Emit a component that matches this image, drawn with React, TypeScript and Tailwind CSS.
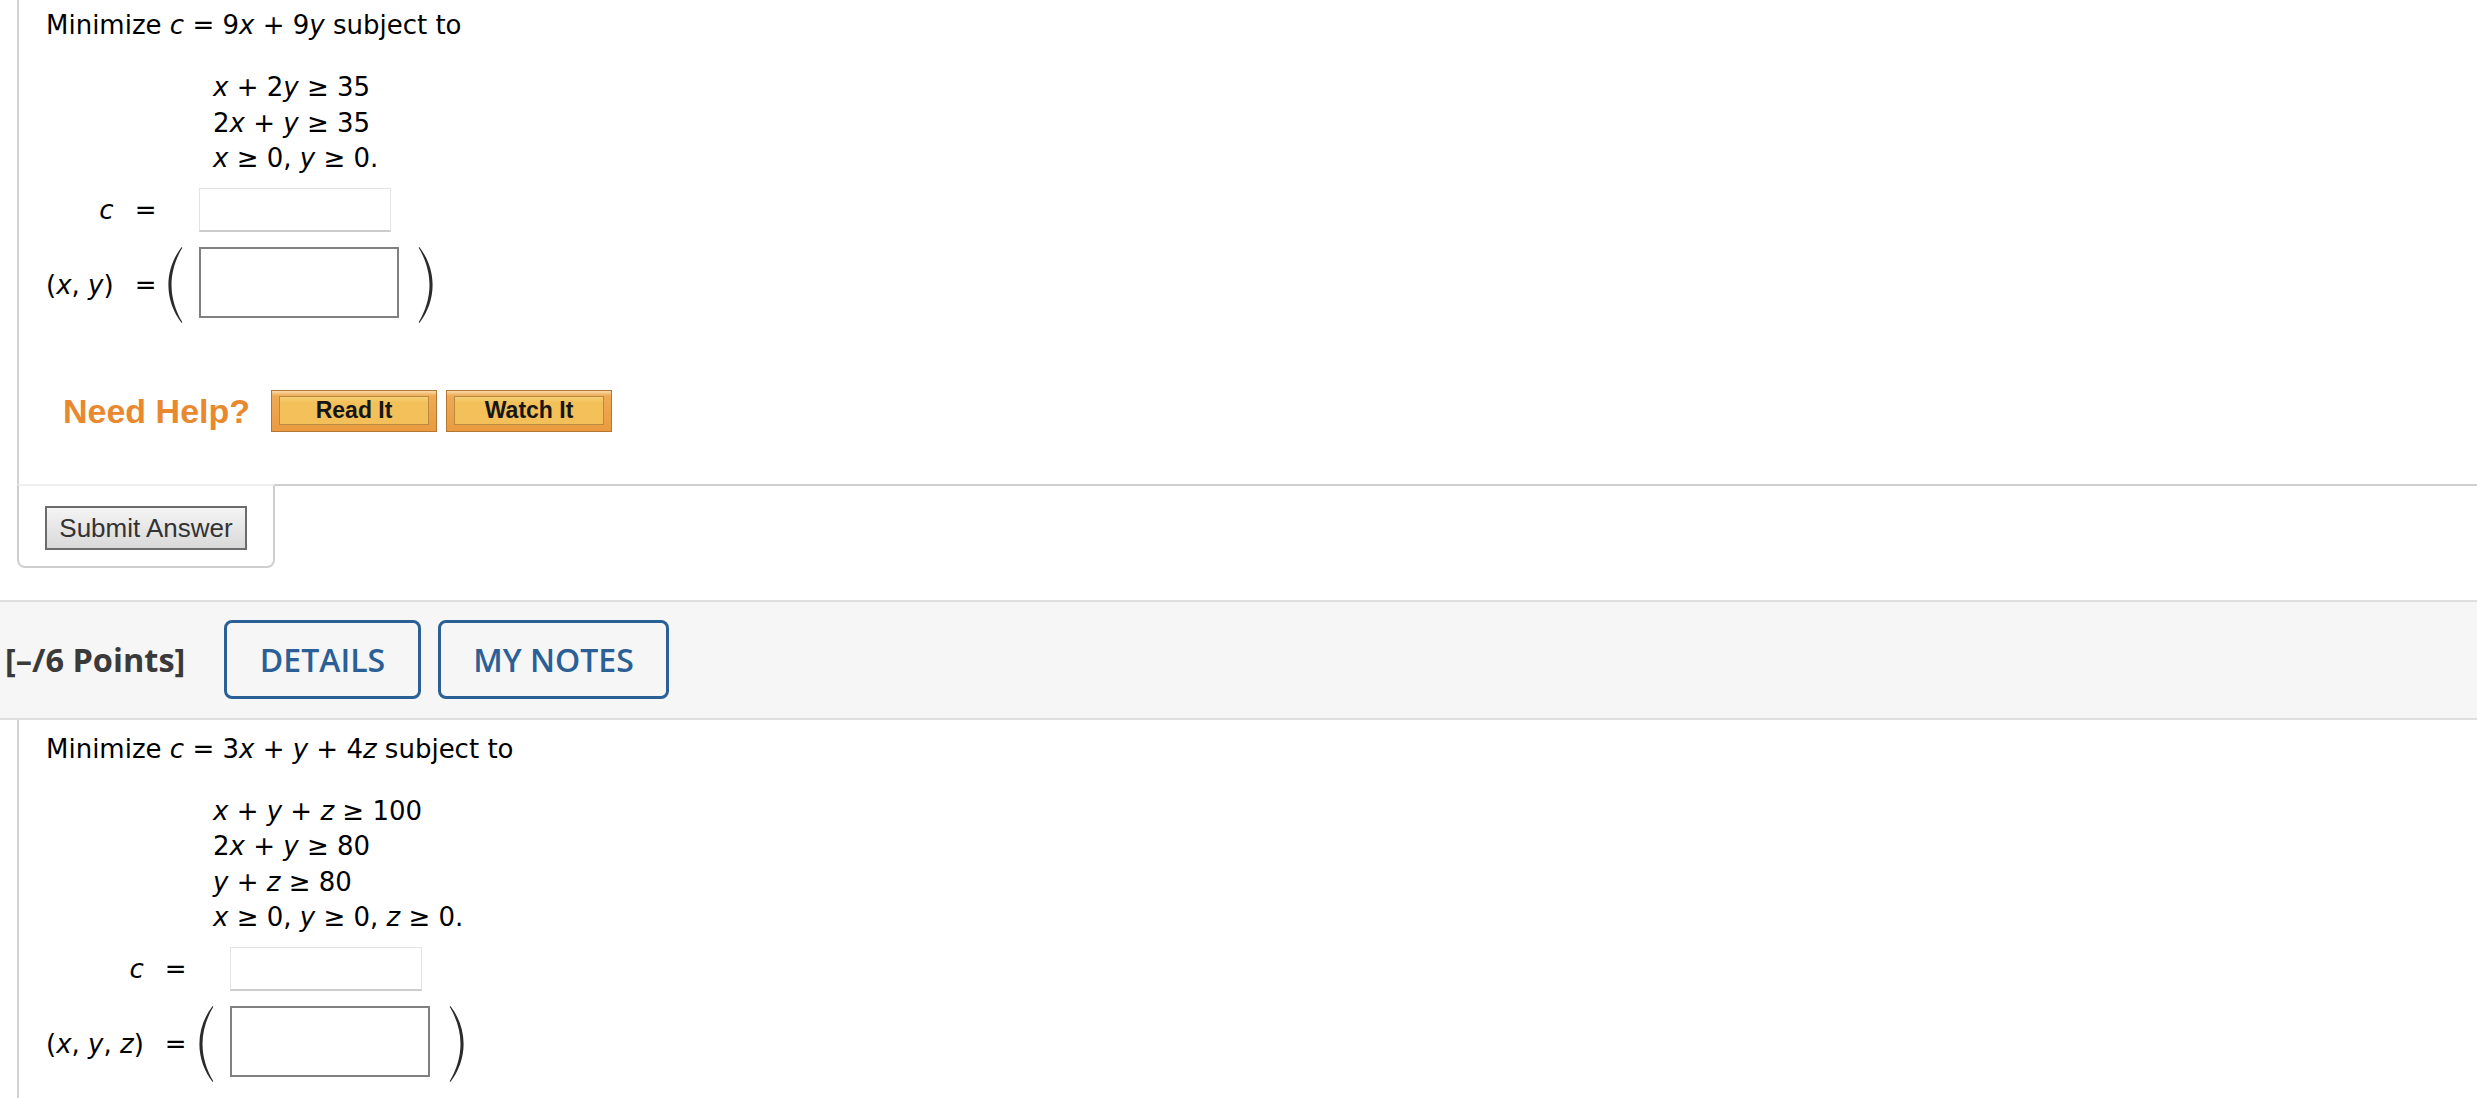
import React from "react";

function LParen() {
  return (
    <svg width="18" height="78" viewBox="0 0 18 78" className="block">
      <path
        d="M15.6 1 C7.2 12 2.4 25 2.4 39 C2.4 53 7.2 66 15.6 77 L16.3 76.3 C9.6 65 5.5 52 5.5 39 C5.5 26 9.6 13 16.3 1.7 Z"
        fill="#2b2b2b"
      />
    </svg>
  );
}

function RParen() {
  return (
    <div className="-scale-x-100">
      <LParen />
    </div>
  );
}

function AnswerGrid({ label }: { label: React.ReactNode }) {
  return (
    <div className="mt-[11px] grid w-fit grid-cols-[auto_auto_auto_auto_auto] items-center gap-y-[14px] text-[26px] leading-[30px]">
      <div className="justify-self-end whitespace-nowrap">
        <i>c</i>
      </div>
      <div className="pl-[21px]">=</div>
      <div />
      <div className="pl-[15px]">
        <div className="h-[44px] w-[192px] border border-[#e3e3e3] border-b-2 border-b-[#cccccc] bg-white" />
      </div>
      <div />

      <div className="justify-self-end whitespace-nowrap">{label}</div>
      <div className="pl-[21px]">=</div>
      <div className="pl-[10px]">
        <LParen />
      </div>
      <div className="pl-[15px] self-start mt-[1px]">
        <div className="h-[71px] w-[200px] border-2 border-[#808080] bg-white" />
      </div>
      <div className="pl-[18px]">
        <RParen />
      </div>
    </div>
  );
}

function Constraints({ lines }: { lines: React.ReactNode[] }) {
  return (
    <div className="mt-[30px] ml-[167px] text-[26px] leading-[35.5px]">
      {lines.map((l, i) => (
        <div key={i} className="whitespace-nowrap">
          {l}
        </div>
      ))}
    </div>
  );
}

function HelpButton({ children }: { children: React.ReactNode }) {
  return (
    <div className="h-[42px] w-[166px] border border-[#b5762f] bg-[linear-gradient(to_bottom,#f8dcaa_0%,#efaa55_12%,#ea9b41_100%)] px-[7px] pt-[5px] pb-[6px]">
      <div className="flex h-full w-full items-center justify-center border border-[#b98a40] bg-[linear-gradient(to_bottom,#f6cf78_0%,#f3c15a_20%,#f2bf58_100%)] font-['Liberation_Sans',Arial,sans-serif] text-[23px] font-bold leading-none text-[#161616]">
        {children}
      </div>
    </div>
  );
}

export default function App() {
  return (
    <div className="h-[1098px] w-full overflow-hidden bg-white font-['DejaVu_Sans',Verdana,sans-serif] text-black">
      {/* Question 1 */}
      <div className="-mt-[4px]">
        <div className="ml-[17px] border-l-2 border-[#d2d2d2] pl-[27px] pt-[14px] pb-[52px]">
          <div className="whitespace-nowrap text-[26px] leading-[30px]">
            Minimize <i>c</i> = 9<i>x</i> + 9<i>y</i> subject to
          </div>
          <Constraints
            lines={[
              <>
                <i>x</i> + 2<i>y</i> ≥ 35
              </>,
              <>
                2<i>x</i> + <i>y</i> ≥ 35
              </>,
              <>
                <i>x</i> ≥ 0, <i>y</i> ≥ 0.
              </>,
            ]}
          />
          <AnswerGrid
            label={
              <>
                (<i>x</i>, <i>y</i>)
              </>
            }
          />
          <div className="mt-[66px] ml-[17px] flex h-[42px] items-center">
            <span className="mr-[21px] font-['Liberation_Sans',Arial,sans-serif] text-[34px] leading-[36px] font-bold text-[#e8892f]">
              Need Help?
            </span>
            <HelpButton>Read It</HelpButton>
            <div className="ml-[9px]">
              <HelpButton>Watch It</HelpButton>
            </div>
          </div>
        </div>
        <div className="ml-[17px] flex">
          <div className="h-[84px] w-[258px] rounded-b-[8px] border-2 border-[#cfcfcf] border-t-[#eeeeee] pt-[20px] pl-[26px]">
            <div className="flex h-[44px] w-[202px] items-center justify-center border-2 border-[#6c6c6c] bg-[linear-gradient(to_bottom,#f4f4f4,#d9d9d9)] font-['Liberation_Sans',Arial,sans-serif] text-[26px] leading-none text-[#333333]">
              Submit Answer
            </div>
          </div>
          <div className="flex-1 self-start border-t-2 border-[#cfcfcf]" />
        </div>
      </div>

      {/* Points band */}
      <div className="mt-[32px] flex h-[120px] items-center border-y-2 border-[#dedede] bg-[#f6f6f6]">
        <div className="w-[224px] pl-[5px] font-['Open_Sans',sans-serif] text-[32.5px] leading-[40px] font-bold whitespace-nowrap text-[#3a3a3a]">
          [–/6 Points]
        </div>
        <div className="flex h-[79px] w-[197px] items-center justify-center rounded-[8px] border-[3px] border-[#2a6096] font-['Open_Sans',sans-serif] text-[32px] leading-[40px] font-semibold text-[#2a6096]">
          DETAILS
        </div>
        <div className="ml-[17px] flex h-[79px] w-[231px] items-center justify-center rounded-[8px] border-[3px] border-[#2a6096] font-['Open_Sans',sans-serif] text-[32px] leading-[40px] font-semibold text-[#2a6096]">
          MY NOTES
        </div>
      </div>

      {/* Question 2 */}
      <div className="ml-[17px] border-l-2 border-[#d2d2d2] pl-[27px] pt-[14px] pb-[60px]">
        <div className="whitespace-nowrap text-[26px] leading-[30px]">
          Minimize <i>c</i> = 3<i>x</i> + <i>y</i> + 4<i>z</i> subject to
        </div>
        <Constraints
          lines={[
            <>
              <i>x</i> + <i>y</i> + <i>z</i> ≥ 100
            </>,
            <>
              2<i>x</i> + <i>y</i> ≥ 80
            </>,
            <>
              <i>y</i> + <i>z</i> ≥ 80
            </>,
            <>
              <i>x</i> ≥ 0, <i>y</i> ≥ 0, <i>z</i> ≥ 0.
            </>,
          ]}
        />
        <AnswerGrid
          label={
            <>
              (<i>x</i>, <i>y</i>, <i>z</i>)
            </>
          }
        />
      </div>
    </div>
  );
}
